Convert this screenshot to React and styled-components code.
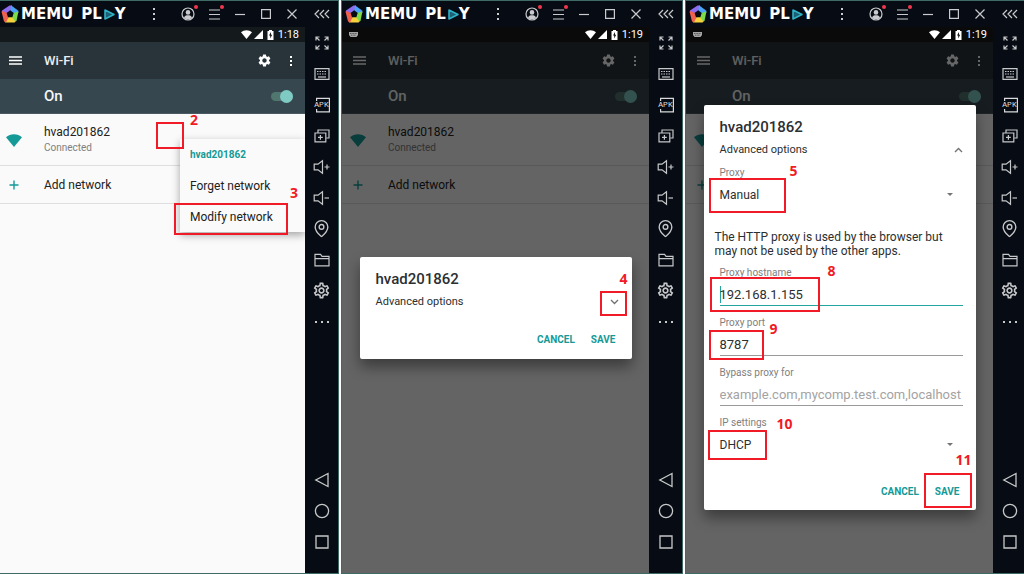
import React from 'react'
import styled, { createGlobalStyle, css } from 'styled-components'
import { MdSettings, MdOutlineSettings } from 'react-icons/md'
import { MapPin } from 'lucide-react'

const TEAL = '#159a97'
const RED = '#f01b26'

const GlobalStyle = createGlobalStyle`
  * {
    box-sizing: border-box;
  }
  body {
    margin: 0;
    background: #fff;
    font-family: Roboto, 'Liberation Sans', sans-serif;
    overflow-x: hidden;
  }
  button, input, select {
    font-family: inherit;
    margin: 0;
    padding: 0;
    border: none;
    background: none;
    color: inherit;
  }
  svg {
    display: block;
    flex-shrink: 0;
  }
`

/* ---------- emulator window ---------- */

const Page = styled.main`
  display: grid;
  grid-template-columns: repeat(3, 1fr);
  gap: 2px;
  margin: 0 -3px;
  min-height: 100vh;
`

const EmulatorWindow = styled.section`
  display: flex;
  flex-direction: column;
  min-width: 0;
  border: 1px solid #3f6b66;
  background: #070b13;
`

const TitleBar = styled.header`
  display: flex;
  align-items: center;
  height: 26px;
  padding-left: 3px;
  color: #c9cbce;
`

const Brand = styled.div`
  display: flex;
  align-items: center;
  gap: 2px;
  flex: 1;
  color: #fff;
  font-family: 'DejaVu Sans', sans-serif;
  font-size: 15px;
  font-weight: bold;
  line-height: 20px;
`

const BrandWord = styled.span`
  display: flex;
  align-items: center;
  margin-left: ${(p) => (p.$spaced ? '6px' : '0')};
`

const BarButton = styled.button`
  position: relative;
  display: flex;
  align-items: center;
  justify-content: center;
  width: ${(p) => (p.$wide ? '33px' : '26px')};
  height: 26px;
  margin-right: ${(p) => (p.$apart ? '8px' : '0')};
`

const Badge = styled.span`
  position: absolute;
  top: 4px;
  right: 3px;
  width: 4px;
  height: 4px;
  border-radius: 50%;
  background: #f0384a;
`

const Body = styled.div`
  display: flex;
  flex: 1;
`

const SideBar = styled.nav`
  display: flex;
  flex-direction: column;
  width: 33px;
  padding-bottom: 16px;
  color: #c6c8ca;
`

const SideButton = styled.button`
  display: flex;
  align-items: center;
  justify-content: center;
  height: 31px;
  margin-top: ${(p) => (p.$first ? 'auto' : '0')};
`

/* ---------- android screen ---------- */

const Screen = styled.div`
  display: flex;
  flex-direction: column;
  flex: 1;
  min-width: 0;
  overflow: hidden;
  background: #fafafa;
`

const StatusBar = styled.div`
  display: flex;
  align-items: center;
  justify-content: flex-end;
  height: 15px;
  padding: 0 6px 0 7px;
  background: ${(p) => (p.$dim ? '#0a0a0b' : '#14191c')};
  color: #fff;
  font-size: 11px;
  line-height: 15px;
`

const KeyboardNote = styled.span`
  margin-right: auto;
`

const StatusIcons = styled.span`
  display: flex;
  align-items: center;
  gap: 2px;
  margin-right: 2px;
`

const Content = styled.div`
  position: relative;
  flex: 1;
  color: #212121;
`

const AppBar = styled.div`
  display: flex;
  align-items: center;
  height: 37px;
  padding: 0 6px 0 11px;
  background: #29343a;
  color: #fff;
`

const AppTitle = styled.h1`
  flex: 1;
  margin: 0 0 0 22px;
  font-size: 13px;
  font-weight: 500;
  color: #eceff1;
`

const IconButton = styled.button`
  display: flex;
  align-items: center;
  justify-content: center;
  width: ${(p) => p.$size || 16}px;
  height: 24px;
  margin-right: ${(p) => (p.$apart ? '11px' : '0')};
`

const SwitchBar = styled.label`
  display: flex;
  align-items: center;
  justify-content: space-between;
  height: 35px;
  padding: 0 12px 0 46px;
  border-bottom: 1px solid #4a5961;
  background: #37474f;
  color: #f5f7f8;
  font-size: 15px;
  font-weight: 500;
`

const Switch = styled.input`
  appearance: none;
  display: flex;
  align-items: center;
  justify-content: flex-end;
  width: 22px;
  height: 9px;
  border-radius: 5px;
  background: #50766f;

  &::after {
    content: '';
    width: 13px;
    height: 13px;
    border-radius: 50%;
    background: #7fcac3;
  }
`

const NetworkRow = styled.div`
  position: relative;
  display: flex;
  align-items: center;
  height: ${(p) => (p.$tall ? '52px' : '38px')};
  padding: 1px 0 0 7px;
  border-bottom: 1px solid #dedede;
  color: ${TEAL};
`

const RowText = styled.div`
  margin-left: 21px;
  color: #212121;
  font-size: 12px;
  line-height: 15px;
`

const Sub = styled.div`
  color: #808080;
  font-size: 10px;
`

const RowIcon = styled.span`
  display: flex;
  justify-content: center;
  width: 18px;
`

const ContextMenu = styled.div`
  position: absolute;
  top: 97px;
  right: 0;
  width: 125px;
  height: 93px;
  background: #fafafa;
  box-shadow: 0 3px 8px rgba(0, 0, 0, 0.35);
`

const MenuTitle = styled.div`
  height: 32px;
  padding-left: 10px;
  color: ${TEAL};
  font-size: 10px;
  font-weight: 700;
  line-height: 32px;
`

const MenuItem = styled.button`
  display: block;
  width: 100%;
  padding-left: 10px;
  text-align: left;
  color: #212121;
  font-size: 12px;
  line-height: 31px;
`

/* ---------- dialog ---------- */

const Overlay = styled.div`
  position: absolute;
  inset: 0;
  display: flex;
  align-items: center;
  justify-content: center;
  background: rgba(0, 0, 0, 0.6);
`

const DialogBox = styled.form`
  position: relative;
  width: 272px;
  border-radius: 2px;
  background: #fff;
  box-shadow: 0 8px 14px rgba(0, 0, 0, 0.4);
  color: #2b2f31;
`

const DialogBody = styled.div`
  padding: 12px 13px ${(p) => (p.$open ? '16px' : '8px')} 16px;
`

const DialogTitle = styled.h2`
  margin: 0 0 2px;
  font-size: 15px;
  font-weight: 500;
  line-height: 20px;
`

const Advanced = styled.button`
  display: flex;
  align-items: center;
  justify-content: space-between;
  width: 100%;
  font-size: 11px;
  line-height: 22px;
`

const Form = styled.div`
  display: flex;
  flex-direction: column;
  gap: 10px;
  padding-top: 5px;
`

const Field = styled.div`
  position: relative;
  display: flex;
  flex-direction: column;
  gap: 3px;
`

const FieldLabel = styled.label`
  color: #808080;
  font-size: 10px;
  line-height: 14px;
`

const control = css`
  width: 100%;
  height: 23px;
`

const Select = styled.select`
  ${control}
  appearance: none;
  font-size: 12px;
`

const SelectArrow = styled.span`
  position: absolute;
  right: 10px;
  bottom: 10px;
`

const InputLine = styled.div`
  ${control}
  display: flex;
  align-items: center;
  border-bottom: 1px solid ${(p) => (p.$active ? '#22a5a0' : '#9a9a9a')};
`

const Caret = styled.span`
  width: 1px;
  height: 17px;
  margin-right: -1px;
  background: #22a5a0;
`

const Input = styled.input`
  flex: 1;
  min-width: 0;
  height: 20px;
  font-size: 13px;

  &::placeholder {
    color: #a3a3a3;
  }
`

const Hint = styled.p`
  margin: 14px 10px -2px -5px;
  font-size: 12px;
  line-height: 14px;
`

const Actions = styled.div`
  display: flex;
  justify-content: flex-end;
  gap: 16px;
  height: 38px;
  padding-right: 16px;
`

const ActionButton = styled.button`
  color: ${TEAL};
  font-size: 10px;
  font-weight: 700;
`

/* ---------- numbered step marks ---------- */

const MarkBox = styled.span`
  position: absolute;
  left: ${(p) => p.$x}px;
  top: ${(p) => p.$y}px;
  width: ${(p) => p.$w}px;
  height: ${(p) => p.$h}px;
  border: 2px solid ${RED};
  pointer-events: none;
`

const MarkNumber = styled.b`
  position: absolute;
  left: ${(p) => p.$x}px;
  top: ${(p) => p.$y}px;
  color: ${RED};
  font-family: 'Noto Sans', sans-serif;
  font-size: 14px;
  line-height: 16px;
`

function Mark({ n, box, at }) {
  return (
    <>
      <MarkBox $x={box[0]} $y={box[1]} $w={box[2]} $h={box[3]} />
      <MarkNumber $x={at[0]} $y={at[1]}>{n}</MarkNumber>
    </>
  )
}

/* ---------- icons ---------- */

function Line({ w = 16, h = 16, sw = 1.2, children }) {
  return (
    <svg width={w} height={h} viewBox={`0 0 ${w} ${h}`} fill="none" stroke="currentColor" strokeWidth={sw}>
      {children}
    </svg>
  )
}

const Logo = () => (
  <svg width="18" height="18" viewBox="0 0 18 18">
    <path d="M9 9 .8 7 1 5.500 8.500 .4 11 .6z" fill="#8f6bf0" />
    <path d="M9 9 10 .3 17.400 5.800 17.200 8z" fill="#4aa3f5" />
    <path d="M9 9 17.400 6.500 15.500 16 13 17z" fill="#7ddc4a" />
    <path d="M9 9 14.500 16.800 13.500 17.400 4 17.600z" fill="#f5d13c" />
    <path d="M9 9 5 17.500 3 16.500 .6 7 1 6z" fill="#f0604e" />
    <path d="M9.200 5.200 12.700 8 11.400 12.200H7L5.600 8z" fill="#070b13" />
  </svg>
)

const PlayMark = () => (
  <svg width="11" height="11" viewBox="0 0 11 11">
    <path d="M1 1v9l9-4.5z" fill="#1d5f73" stroke="#2fb0c7" strokeWidth="1.6" strokeLinejoin="round" />
  </svg>
)

const Dots = ({ s = 2, h = 14 }) => (
  <svg width="4" height={h} viewBox={`0 0 4 ${h}`} fill="currentColor">
    {[0, 1, 2].map((i) => (
      <rect key={i} x="1" y={1 + i * ((h - 2 - s) / 2)} width={s} height={s} />
    ))}
  </svg>
)

const UserIcon = () => (
  <Line w={14} h={14}>
    <circle cx="7" cy="7" r="6" />
    <circle cx="7" cy="5.4" r="2.3" fill="currentColor" stroke="none" />
    <path d="M3 10.8c.6-2 2-2.6 4-2.6s3.4.6 4 2.6c-1 1-2.4 1.6-4 1.6s-3-.6-4-1.6z" fill="currentColor" stroke="none" />
  </Line>
)

const MenuLines = ({ w = 13, h = 10, sw = 1.4 }) => (
  <Line w={w} h={h} sw={sw}>
    <path d={`M0 1h${w}M0 ${h / 2}h${w}M0 ${h - 1}h${w}`} />
  </Line>
)

const MinusIcon = () => <Line w={10} h={10}><path d="M0 5.5h10" /></Line>
const SquareIcon = () => <Line w={10} h={10}><path d="M.6 .6h8.8v8.8H.6z" /></Line>
const CloseIcon = () => <Line w={10} h={10}><path d="M.5 .5l9 9M9.5 .5l-9 9" /></Line>
const CollapseIcon = () => <Line h={10}><path d="M5 1 1 5l4 4M10 1 6 5l4 4M15 1l-4 4 4 4" /></Line>

const ExpandIcon = () => (
  <Line>
    <path d="M2 5.5V2h3.5M2 2l3.5 3.5M10.5 2H14v3.5M14 2l-3.5 3.5M2 10.5V14h3.5M2 14l3.5-3.5M14 10.5V14h-3.5M14 14l-3.5-3.5" />
  </Line>
)
const KeyboardIcon = () => (
  <Line>
    <path d="M1 2.6h14v10.8H1z" />
    <path d="M3 5.5h10M3 8h10" strokeDasharray="1.5 1" />
    <path d="M4 11h8" />
  </Line>
)
const ApkFrame = styled.span`
  position: relative;
  display: flex;
  align-items: center;
  justify-content: center;
  color: #d8dadc;
  font-family: 'Liberation Mono', monospace;
  font-size: 8px;
  line-height: 16px;

  svg {
    position: absolute;
    left: 0;
    top: 0;
  }
`
const ApkIcon = () => (
  <ApkFrame>
    <Line><path d="M2.6 4V1.4h12.8v13.4H2.6V12" /></Line>
    APK
  </ApkFrame>
)
const AddWindowIcon = () => (
  <Line>
    <path d="M4 4.5V2h11v8h-2.5M1 5h10.8v8.8H1zM6.4 7v4.8M4 9.4h4.8" />
  </Line>
)
const VolumeIcon = ({ up }) => (
  <Line w={17}>
    <path d="M9.5 1.8v12.4L5 10.8H1.2V5.2H5z" />
    <path d={up ? 'M11.5 8h5M14 5.5v5' : 'M11.5 8h4.5'} />
  </Line>
)
const FolderIcon = () => (
  <Line><path d="M1 13.8V2.4h5.6l1.4 2h7v9.4zM1 6.6h14" /></Line>
)
const MoreIcon = () => (
  <svg width="16" height="4" viewBox="0 0 16 4" fill="currentColor">
    <path d="M1 1h2v2H1zM7 1h2v2H7zM13 1h2v2h-2z" />
  </svg>
)
const BackIcon = () => <Line sw={1.3}><path d="M14 1.5v13L1.8 8z" /></Line>
const HomeIcon = () => <Line sw={1.3}><circle cx="8" cy="8" r="6.6" /></Line>
const RecentIcon = () => <Line sw={1.3}><path d="M2 2h12v12H2z" /></Line>

const WifiIcon = ({ w = 16, h = 13 }) => (
  <svg width={w} height={h} viewBox="0 0 16 13" fill="currentColor">
    <path d="M8 13 0 3.2C2.2 1.3 5 .3 8 .3s5.8 1 8 2.9z" />
  </svg>
)
const SignalIcon = () => (
  <svg width="10" height="9" viewBox="0 0 10 9" fill="currentColor"><path d="M9 0v9H0z" /></svg>
)
const BatteryIcon = () => (
  <svg width="10" height="10" viewBox="2 0 10 10">
    <path d="M5 0h3v1h1.5v9h-6V1H5z" fill="#fff" />
    <path d="M7 2 5 5.6h1.2v2.9l2-3.7H7z" fill="#111" />
  </svg>
)
const TinyKeyboard = () => (
  <svg width="9" height="6" viewBox="0 0 9 6">
    <path d="M0 0h9v3L7.5 5h-6L0 3z" fill="#a5a5a5" />
    <path d="M1 1.5h7M2 3.2h5" stroke="#333" strokeWidth=".7" strokeDasharray="1 .6" />
  </svg>
)
const PlusIcon = () => <Line w={10} h={10} sw={1.4}><path d="M5 .5v9M.5 5h9" /></Line>
const Chevron = ({ up }) => (
  <Line w={9} h={6} sw={1.3}><path d={up ? 'M1 5l3.5-3.5L8 5' : 'M1 1l3.5 3.5L8 1'} stroke="#707070" /></Line>
)
const ArrowDown = () => (
  <svg width="6" height="3" viewBox="0 0 6 3"><path d="M0 0h6L3 3z" fill="#757575" /></svg>
)

const TOOLS = [
  ['Full screen', <ExpandIcon />],
  ['Keyboard mapping', <KeyboardIcon />],
  ['Install APK', <ApkIcon />],
  ['New window', <AddWindowIcon />],
  ['Volume up', <VolumeIcon up />],
  ['Volume down', <VolumeIcon />],
  ['Location', <MapPin size={19} strokeWidth={1.7} />],
  ['Shared folder', <FolderIcon />],
  ['Settings', <MdOutlineSettings size={19} />],
  ['More', <MoreIcon />],
]

const NAV = [
  ['Back', <BackIcon />],
  ['Home', <HomeIcon />],
  ['Recent apps', <RecentIcon />],
]

function Emulator({ time, dim, menu, children }) {
  return (
    <EmulatorWindow>
      <TitleBar>
        <Brand>
          <Logo />
          <BrandWord>MEMU</BrandWord>
          <BrandWord $spaced>PL</BrandWord>
          <BrandWord><PlayMark />Y</BrandWord>
        </Brand>
        <BarButton aria-label="Options" $apart><Dots /></BarButton>
        <BarButton aria-label="Account"><UserIcon /><Badge /></BarButton>
        <BarButton aria-label="Menu"><MenuLines w={11} h={11} sw={1.2} /><Badge /></BarButton>
        <BarButton aria-label="Minimize"><MinusIcon /></BarButton>
        <BarButton aria-label="Maximize"><SquareIcon /></BarButton>
        <BarButton aria-label="Close"><CloseIcon /></BarButton>
        <BarButton aria-label="Collapse sidebar" $wide><CollapseIcon /></BarButton>
      </TitleBar>
      <Body>
        <Screen>
          <StatusBar $dim={dim}>
            {dim && <KeyboardNote><TinyKeyboard /></KeyboardNote>}
            <StatusIcons>
              <WifiIcon w={11} h={9} />
              <SignalIcon />
              <BatteryIcon />
            </StatusIcons>
            {time}
          </StatusBar>
          <Content>
            <AppBar>
              <IconButton aria-label="Navigation" $size={13}><MenuLines h={9} sw={1.3} /></IconButton>
              <AppTitle>Wi-Fi</AppTitle>
              <IconButton aria-label="Wi-Fi settings" $apart><MdSettings size={15} /></IconButton>
              <IconButton aria-label="More options"><Dots h={12} /></IconButton>
            </AppBar>
            <SwitchBar>
              On
              <Switch type="checkbox" defaultChecked />
            </SwitchBar>
            <NetworkRow $tall>
              <RowIcon><WifiIcon /></RowIcon>
              <RowText>hvad201862<Sub>Connected</Sub></RowText>
            </NetworkRow>
            <NetworkRow>
              <RowIcon><PlusIcon /></RowIcon>
              <RowText>Add network</RowText>
            </NetworkRow>
            {menu}
            {children && <Overlay>{children}</Overlay>}
          </Content>
        </Screen>
        <SideBar>
          {TOOLS.map(([name, icon]) => (
            <SideButton key={name} aria-label={name}>{icon}</SideButton>
          ))}
          {NAV.map(([name, icon], i) => (
            <SideButton key={name} aria-label={name} $first={i === 0}>{icon}</SideButton>
          ))}
        </SideBar>
      </Body>
    </EmulatorWindow>
  )
}

function NetworkMenu() {
  return (
    <ContextMenu>
      <MenuTitle>hvad201862</MenuTitle>
      <MenuItem>Forget network</MenuItem>
      <MenuItem>Modify network</MenuItem>
      <Mark n="2" box={[-24, -17, 28, 27]} at={[10, -27]} />
      <Mark n="3" box={[-6, 64, 114, 32]} at={[110, 46]} />
    </ContextMenu>
  )
}

function Dialog({ open, children, marks }) {
  return (
    <DialogBox>
      <DialogBody $open={open}>
        <DialogTitle>hvad201862</DialogTitle>
        <Advanced type="button">Advanced options <Chevron up={open} /></Advanced>
        {children}
      </DialogBody>
      <Actions>
        <ActionButton type="button">CANCEL</ActionButton>
        <ActionButton type="button">SAVE</ActionButton>
      </Actions>
      {marks}
    </DialogBox>
  )
}

function SelectField({ id, label, value }) {
  return (
    <Field>
      <FieldLabel htmlFor={id}>{label}</FieldLabel>
      <Select id={id} defaultValue={value}>
        <option>{value}</option>
      </Select>
      <SelectArrow><ArrowDown /></SelectArrow>
    </Field>
  )
}

function TextField({ id, label, active, ...rest }) {
  return (
    <Field>
      <FieldLabel htmlFor={id}>{label}</FieldLabel>
      <InputLine $active={active}>
        {active && <Caret />}
        <Input id={id} type="text" {...rest} />
      </InputLine>
    </Field>
  )
}

function App() {
  return (
    <>
      <GlobalStyle />
      <Page>
        <Emulator time="1:18" menu={<NetworkMenu />} />
        <Emulator time="1:19" dim>
          <Dialog marks={<Mark n="4" box={[240, 34, 27, 25]} at={[260, 14]} />} />
        </Emulator>
        <Emulator time="1:19" dim>
          <Dialog
            open
            marks={
              <>
                <Mark n="5" box={[5, 73, 77, 35]} at={[86, 58]} />
                <Mark n="8" box={[6, 172, 110, 35]} at={[124, 158]} />
                <Mark n="9" box={[5, 225, 55, 30]} at={[66, 216]} />
                <Mark n="10" box={[4, 325, 59, 30]} at={[73, 311]} />
                <Mark n="11" box={[220, 368, 48, 35]} at={[252, 347]} />
              </>
            }
          >
            <Form>
              <SelectField id="proxy" label="Proxy" value="Manual" />
              <Hint>
                The HTTP proxy is used by the browser but may not be used by the other apps.
              </Hint>
              <TextField id="host" label="Proxy hostname" defaultValue="192.168.1.155" active />
              <TextField id="port" label="Proxy port" defaultValue="8787" />
              <TextField id="bypass" label="Bypass proxy for" placeholder="example.com,mycomp.test.com,localhost" />
              <SelectField id="ip" label="IP settings" value="DHCP" />
            </Form>
          </Dialog>
        </Emulator>
      </Page>
    </>
  )
}

export default App
